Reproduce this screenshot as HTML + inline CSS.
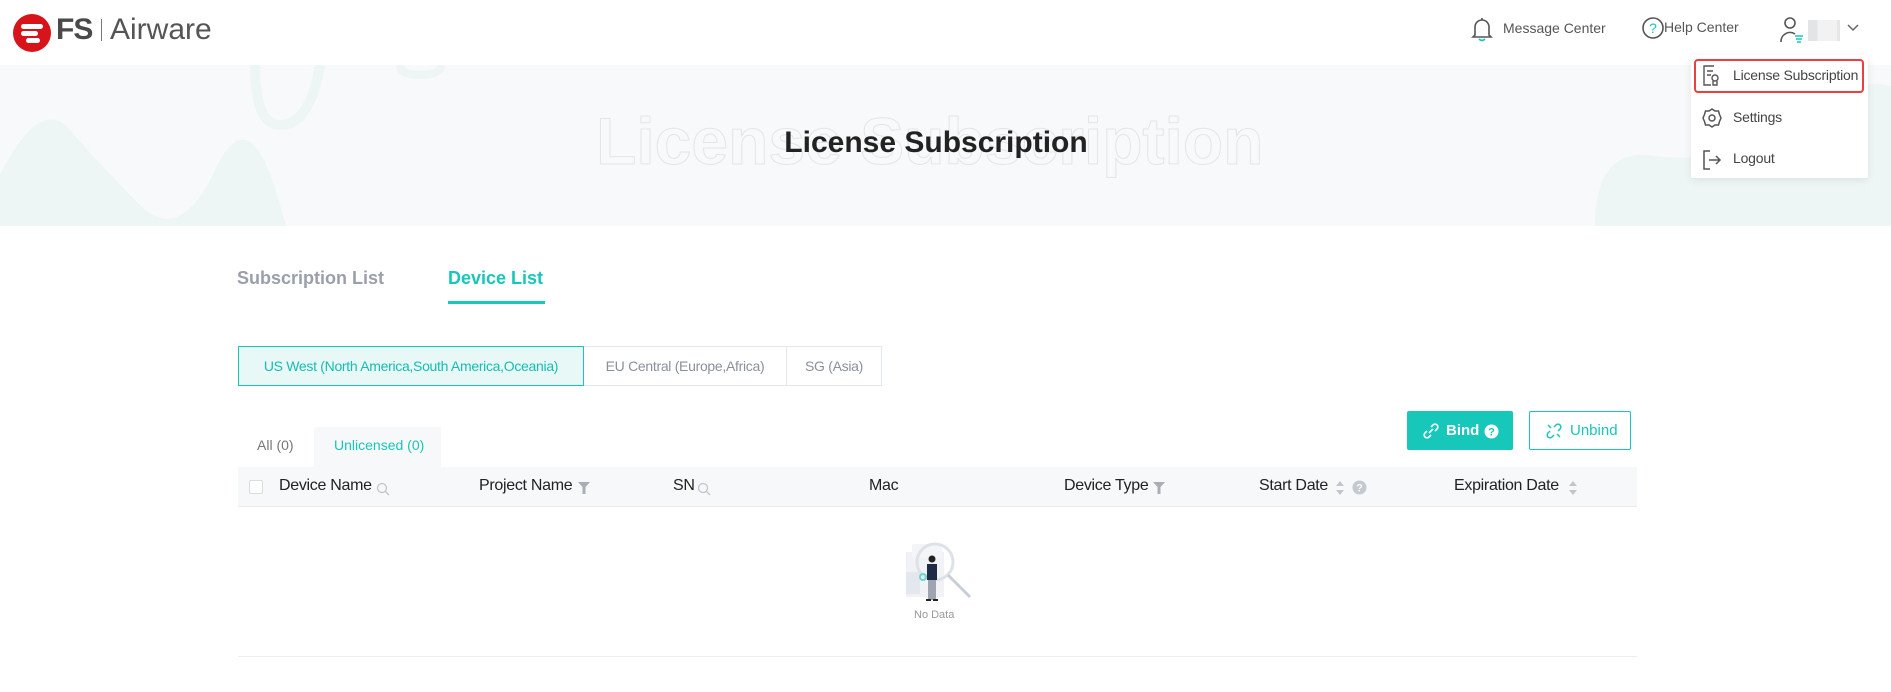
<!DOCTYPE html>
<html><head><meta charset="utf-8">
<style>
*{margin:0;padding:0;box-sizing:border-box}
body{width:1891px;height:692px;overflow:hidden;background:#fff;font-family:"Liberation Sans",sans-serif;color:#333;position:relative}
.abs{position:absolute}
.hdr{left:0;top:0;width:1891px;height:65px;background:#fff}
.banner{left:0;top:65px;width:1891px;height:161px;background:#f7f9fa;overflow:hidden}
.t{white-space:nowrap}
.seg{top:346px;height:40px;border:1px solid #e3e6ea;font-size:14px;color:#8a909c;display:flex;align-items:center;justify-content:center;letter-spacing:-0.3px}
.th{top:467px;height:40px;left:238px;width:1399px;background:#f7f8fa;border-bottom:1px solid #e8eaee}
.col{top:477px;font-size:16px;color:#222;letter-spacing:-0.3px}
.dd{left:1691px;top:55px;width:177px;height:123px;background:#fff;box-shadow:0 2px 8px rgba(0,0,0,.08)}
.ddi{font-size:14px;color:#444;letter-spacing:-0.2px}
</style></head><body>
<div class="abs hdr"></div>
<svg class="abs" style="left:12px;top:13px" width="40" height="40" viewBox="0 0 40 40">
<circle cx="20" cy="20" r="19" fill="#d7141a"/>
<rect x="9" y="11" width="22" height="5" rx="2.5" fill="#fff"/>
<rect x="9" y="18" width="17" height="5" rx="2.5" fill="#fff"/>
<rect x="14" y="25" width="14" height="5" rx="2.5" fill="#fff"/>
</svg>
<div class="abs t" style="left:56px;top:13px;font-size:30px;font-weight:bold;color:#4a4a4a;letter-spacing:-1px">FS</div>
<div class="abs" style="left:101px;top:19px;width:1px;height:22px;background:#777"></div>
<div class="abs t" style="left:110px;top:13px;font-size:30px;color:#555">Airware</div>

<svg class="abs" style="left:1471px;top:16px" width="22" height="26" viewBox="0 0 22 26" fill="none" stroke="#555" stroke-width="1.6">
<path d="M11 2v2M4 19V11a7 7 0 0 1 14 0v8l2 2H2z"/><path d="M8 23q3 3 6 0" stroke="#17c7b9"/></svg>
<div class="abs t" style="left:1503px;top:20px;font-size:14px;color:#555">Message Center</div>
<svg class="abs" style="left:1642px;top:17px" width="22" height="22" viewBox="0 0 22 22"><circle cx="11" cy="11" r="10" fill="none" stroke="#555" stroke-width="1.6"/><text x="11" y="16" font-size="14" text-anchor="middle" fill="#17c7b9" font-family="Liberation Sans">?</text></svg>
<div class="abs t" style="left:1664px;top:19px;font-size:14px;color:#555">Help Center</div>
<svg class="abs" style="left:1779px;top:16px" width="26" height="28" viewBox="0 0 26 28" fill="none" stroke="#555" stroke-width="1.6"><circle cx="11" cy="7" r="5"/><path d="M2 26a9 9 0 0 1 14-8"/><path d="M16 20h8M17 23h6M18 26h4" stroke="#17c7b9"/></svg>
<div class="abs" style="left:1808px;top:20px;width:32px;height:21px;background:linear-gradient(90deg,#e2e4e6 0 30%,#f2f2f2 30% 90%,#e6e6e6 90%)"></div>
<svg class="abs" style="left:1847px;top:24px" width="12" height="8" viewBox="0 0 12 8"><path d="M1 1l5 5 5-5" fill="none" stroke="#666" stroke-width="1.5"/></svg>

<div class="abs banner">
<svg class="abs" style="left:0;top:0" width="1891" height="161">
<path d="M255 0q0 60 25 60q30 0 40-60" fill="none" stroke="#eef6f5" stroke-width="10"/>
<path d="M400 0q0 10 20 10q20 0 22-10" fill="none" stroke="#eef6f5" stroke-width="8"/>
<path d="M0 110Q40 30 70 65T140 140T215 105T280 140T340 161H0z" fill="#eef5f5"/>
<path d="M1595 161q0-80 60-70q80 10 140-40q60-40 96-30v140z" fill="#eef5f5"/>
</svg>
<div class="abs t" style="left:596px;top:38px;font-size:66px;font-weight:bold;color:transparent;-webkit-text-stroke:1px #e3e6e8;letter-spacing:0px">License Subscription</div>
<div class="abs t" style="left:0;width:1872px;text-align:center;top:61px;font-size:30px;font-weight:bold;color:#222">License Subscription</div>
</div>

<div class="abs dd"></div>
<div class="abs" style="left:1694px;top:59px;width:170px;height:34px;border:2px solid #e8413f;border-radius:4px"></div>
<svg class="abs" style="left:1702px;top:65px" width="18" height="22" viewBox="0 0 18 22" fill="none" stroke="#555" stroke-width="1.4"><path d="M12 1H2v19h7"/><path d="M5 6h6M5 10h4"/><circle cx="13" cy="13" r="3"/><path d="M11 16v4h4v-4"/></svg>
<div class="abs t ddi" style="left:1733px;top:67px">License Subscription</div>
<svg class="abs" style="left:1702px;top:108px" width="20" height="20" viewBox="0 0 20 20" fill="none" stroke="#555" stroke-width="1.5"><path d="M10 1l3 2 3.5 0 1 3.5L19 10l-1.5 3.5-1 3.5H13l-3 2-3-2H3.5l-1-3.5L1 10l1.5-3.5 1-3.5H7z"/><circle cx="10" cy="10" r="3"/></svg>
<div class="abs t ddi" style="left:1733px;top:109px">Settings</div>
<svg class="abs" style="left:1702px;top:150px" width="20" height="20" viewBox="0 0 20 20" fill="none" stroke="#555" stroke-width="1.5"><path d="M8 1H2v18h6"/><path d="M7 10h11M14 6l4 4-4 4"/></svg>
<div class="abs t ddi" style="left:1733px;top:150px">Logout</div>

<div class="abs t" style="left:237px;top:268px;font-size:18px;font-weight:bold;color:#9a9fab">Subscription List</div>
<div class="abs t" style="left:448px;top:268px;font-size:18px;font-weight:bold;color:#17c7b9">Device List</div>
<div class="abs" style="left:448px;top:301px;width:97px;height:3px;background:#17c7b9"></div>

<div class="abs seg" style="left:238px;width:346px;background:#e8f8f7;border-color:#17c7b9;color:#17bdb0;z-index:2">US West (North America,South America,Oceania)</div>
<div class="abs seg" style="left:583px;width:204px">EU Central (Europe,Africa)</div>
<div class="abs seg" style="left:786px;width:96px">SG (Asia)</div>

<div class="abs t" style="left:257px;top:437px;font-size:14px;color:#777">All (0)</div>
<div class="abs" style="left:314px;top:427px;width:127px;height:40px;background:#f7f8fa"></div>
<div class="abs t" style="left:334px;top:437px;font-size:14px;color:#17c7b9">Unlicensed (0)</div>

<div class="abs" style="left:1407px;top:411px;width:106px;height:39px;background:#17c7b9;border-radius:2px"></div>
<svg class="abs" style="left:1422px;top:422px" width="18" height="18" viewBox="0 0 18 18" fill="none" stroke="#fff" stroke-width="1.6"><path d="M7 11l4-4"/><path d="M5 9l-2 2a2.8 2.8 0 0 0 4 4l2-2M9 5l2-2a2.8 2.8 0 0 1 4 4l-2 2"/></svg>
<div class="abs t" style="left:1446px;top:422px;font-size:15px;color:#fff;font-weight:bold">Bind</div>
<svg class="abs" style="left:1484px;top:424px" width="15" height="15" viewBox="0 0 15 15"><circle cx="7.5" cy="7.5" r="7" fill="#fff"/><text x="7.5" y="11.5" font-size="11" font-weight="bold" text-anchor="middle" fill="#17c7b9" font-family="Liberation Sans">?</text></svg>
<div class="abs" style="left:1529px;top:411px;width:102px;height:39px;border:1px solid #17c7b9;border-radius:2px"></div>
<svg class="abs" style="left:1545px;top:422px" width="18" height="18" viewBox="0 0 18 18" fill="none" stroke="#17c7b9" stroke-width="1.5"><path d="M5 9l-2 2a2.8 2.8 0 0 0 4 4l2-2M9 5l2-2a2.8 2.8 0 0 1 4 4l-2 2M3 3l3 3M12 12l3 3"/></svg>
<div class="abs t" style="left:1570px;top:422px;font-size:15px;color:#17c7b9">Unbind</div>

<div class="abs th"></div>
<div class="abs" style="left:249px;top:480px;width:14px;height:14px;border:1px solid #d9dce0;background:#fff;border-radius:2px"></div>
<div class="abs t col" style="left:279px">Device Name</div>
<div class="abs t col" style="left:479px">Project Name</div>
<div class="abs t col" style="left:673px">SN</div>
<div class="abs t col" style="left:869px">Mac</div>
<div class="abs t col" style="left:1064px">Device Type</div>
<div class="abs t col" style="left:1259px">Start Date</div>
<div class="abs t col" style="left:1454px">Expiration Date</div>
<svg class="abs" style="left:376px;top:482px" width="14" height="14" viewBox="0 0 14 14" fill="none" stroke="#c2c6cc" stroke-width="1.3"><circle cx="6" cy="6" r="4.5"/><path d="M9.5 9.5L13 13"/></svg>
<svg class="abs" style="left:697px;top:482px" width="14" height="14" viewBox="0 0 14 14" fill="none" stroke="#c2c6cc" stroke-width="1.3"><circle cx="6" cy="6" r="4.5"/><path d="M9.5 9.5L13 13"/></svg>
<svg class="abs" style="left:578px;top:481px" width="12" height="14" viewBox="0 0 12 14"><path d="M0 1h12L7.5 6v7h-3V6z" fill="#a9aeb6"/></svg>
<svg class="abs" style="left:1153px;top:481px" width="12" height="14" viewBox="0 0 12 14"><path d="M0 1h12L7.5 6v7h-3V6z" fill="#a9aeb6"/></svg>
<svg class="abs" style="left:1335px;top:480px" width="10" height="16" viewBox="0 0 10 16" fill="#c2c6cc"><path d="M5 1l4 5H1zM5 15l4-5H1z"/></svg>
<svg class="abs" style="left:1352px;top:480px" width="15" height="15" viewBox="0 0 15 15"><circle cx="7.5" cy="7.5" r="7" fill="#c5c9d0"/><text x="7.5" y="11.5" font-size="11" font-weight="bold" text-anchor="middle" fill="#fff" font-family="Liberation Sans">?</text></svg>
<svg class="abs" style="left:1568px;top:480px" width="10" height="16" viewBox="0 0 10 16" fill="#c2c6cc"><path d="M5 1l4 5H1zM5 15l4-5H1z"/></svg>

<svg class="abs" style="left:898px;top:532px" width="82" height="75" viewBox="0 0 82 75">
<path d="M8 20h38v45H8z" fill="#f0f2f5"/>
<path d="M14 12h30v14H14z" fill="#f4f5f7"/>
<rect x="8" y="40" width="14" height="22" fill="#e3e8ef"/>
<circle cx="37" cy="30" r="18" fill="none" stroke="#dde2e8" stroke-width="3"/>
<path d="M50 43l22 22" stroke="#c9ced6" stroke-width="3"/>
<circle cx="25" cy="45" r="3" fill="none" stroke="#6dd6cc" stroke-width="2"/>
<circle cx="34" cy="27" r="3.5" fill="#222"/>
<path d="M29 32h10v16h-10z" fill="#1f2a44"/>
<path d="M30 48h8v20h-8z" fill="#9ea4b0"/>
<path d="M28 68h5M35 68h5" stroke="#222" stroke-width="2"/>
</svg>
<div class="abs t" style="left:914px;top:609px;font-size:11px;color:#999">No Data</div>
<div class="abs" style="left:238px;top:656px;width:1399px;height:1px;background:#eceef1"></div>
</body></html>
